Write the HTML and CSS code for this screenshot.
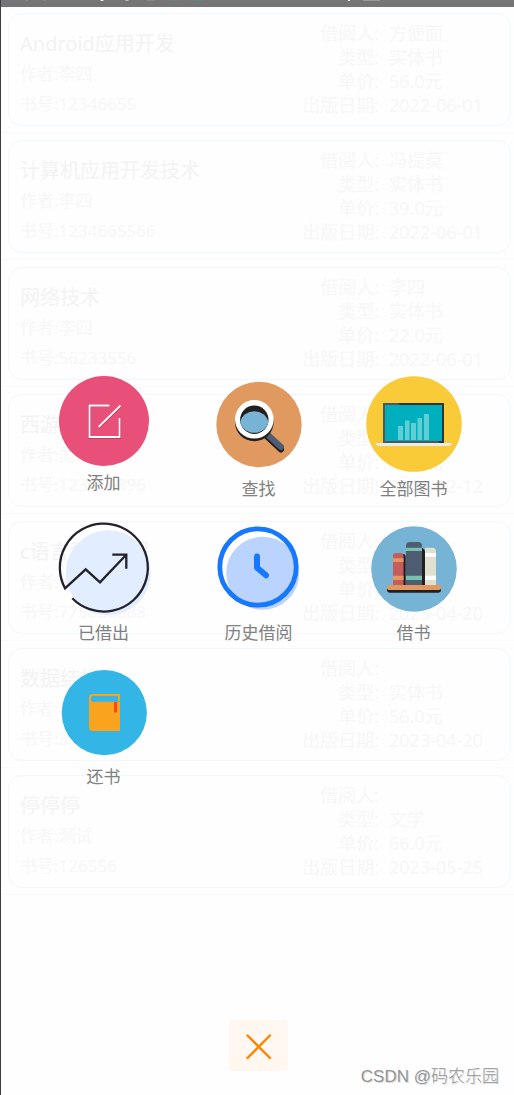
FILE: index.html
```html
<!DOCTYPE html>
<html lang="zh-CN">
<head>
<meta charset="utf-8">
<meta name="viewport" content="width=device-width, initial-scale=1">
<title>图书列表</title>
<link rel="stylesheet" href="styles.css">
</head>
<body>
<div class="screen">
  <header class="status" aria-hidden="true">
    <svg class="status-icons" width="400" height="7" viewBox="0 0 400 7">
      <circle cx="101" cy="-1" r="2" fill="#fff"/>
      <circle cx="126" cy="-1" r="2" fill="#ccc"/>
      <path d="M24 0h3M42 0h3M146 0h8" stroke="#999"/>
      <path d="M169 0h9" stroke="#6c9168"/>
      <path d="M193 0h8" stroke="#4a9d88"/>
      <path d="M348 0v1" stroke="#fff" stroke-width="2"/>
      <path d="M362 0h17" stroke="#bbb"/>
    </svg>
  </header>
  <main>
    <ul class="books">
      <li class="row"><article class="card">
        <div class="info"><h2 class="title">Android应用开发</h2><p>作者:李四</p><p>书号:12346655</p></div>
        <dl class="meta"><dt>借阅人:</dt><dd>方便面</dd><dt>类型:</dt><dd>实体书</dd><dt>单价:</dt><dd>56.0元</dd><dt>出版日期:</dt><dd>2022-06-01</dd></dl>
      </article></li>
      <li class="row"><article class="card">
        <div class="info"><h2 class="title">计算机应用开发技术</h2><p>作者:李四</p><p>书号:1234665566</p></div>
        <dl class="meta"><dt>借阅人:</dt><dd>冯提莫</dd><dt>类型:</dt><dd>实体书</dd><dt>单价:</dt><dd>39.0元</dd><dt>出版日期:</dt><dd>2022-06-01</dd></dl>
      </article></li>
      <li class="row"><article class="card">
        <div class="info"><h2 class="title">网络技术</h2><p>作者:李四</p><p>书号:56233556</p></div>
        <dl class="meta"><dt>借阅人:</dt><dd>李四</dd><dt>类型:</dt><dd>实体书</dd><dt>单价:</dt><dd>22.0元</dd><dt>出版日期:</dt><dd>2022-06-01</dd></dl>
      </article></li>
      <li class="row"><article class="card">
        <div class="info"><h2 class="title">西游记</h2><p>作者:吴承恩</p><p>书号:123456896</p></div>
        <dl class="meta"><dt>借阅人:</dt><dd></dd><dt>类型:</dt><dd>实体书</dd><dt>单价:</dt><dd>56.0元</dd><dt>出版日期:</dt><dd>2021-12-12</dd></dl>
      </article></li>
      <li class="row"><article class="card">
        <div class="info"><h2 class="title">c语言程序教程</h2><p>作者:李四</p><p>书号:775858888</p></div>
        <dl class="meta"><dt>借阅人:</dt><dd></dd><dt>类型:</dt><dd>实体书</dd><dt>单价:</dt><dd>56.0元</dd><dt>出版日期:</dt><dd>2023-04-20</dd></dl>
      </article></li>
      <li class="row"><article class="card">
        <div class="info"><h2 class="title">数据结构</h2><p>作者:李四</p><p>书号:35666</p></div>
        <dl class="meta"><dt>借阅人:</dt><dd></dd><dt>类型:</dt><dd>实体书</dd><dt>单价:</dt><dd>56.0元</dd><dt>出版日期:</dt><dd>2023-04-20</dd></dl>
      </article></li>
      <li class="row"><article class="card">
        <div class="info"><h2 class="title">停停停</h2><p>作者:测试</p><p>书号:126556</p></div>
        <dl class="meta"><dt>借阅人:</dt><dd></dd><dt>类型:</dt><dd>文学</dd><dt>单价:</dt><dd>66.0元</dd><dt>出版日期:</dt><dd>2023-05-25</dd></dl>
      </article></li>
    </ul>
  </main>

  <div class="overlay">
    <nav class="menu">
      <button class="item" type="button">
        <svg width="90" height="90" viewBox="0 0 90 90" aria-hidden="true">
          <circle cx="45" cy="45" r="45" fill="#e8507a"/>
          <g fill="none" stroke="#c23a62" stroke-width="3"><path d="M51 29.5H30.500V61.500H60.500V42M39.500 51.500L61.500 30"/></g>
          <g fill="none" stroke="#fff" stroke-width="1.800"><path d="M50.500 29.500H30.500V61H60.500V42M39.500 51L61.500 29.500"/></g>
        </svg>
        <span>添加</span>
      </button>
      <button class="item" type="button">
        <svg width="96" height="96" viewBox="0 0 96 96" aria-hidden="true">
          <circle cx="48" cy="48.500" r="42.700" fill="#e0995e"/>
          <path d="M56.500 61L70 73.500" stroke="#231f20" stroke-width="6" stroke-linecap="round"/>
          <path d="M56.500 58.500L70 71" stroke="#4f5d73" stroke-width="6" stroke-linecap="round"/>
          <circle cx="43.300" cy="46" r="19.300" fill="#231f20"/>
          <circle cx="43.300" cy="43.300" r="19.300" fill="#fff"/>
          <circle cx="43.300" cy="43.800" r="14.200" fill="#231f20"/>
          <path d="M29.300 46a14.200 13 0 0 1 28 0 14.100 12.300 0 0 1-28 0z" fill="#77b3d4"/>
        </svg>
        <span>查找</span>
      </button>
      <button class="item" type="button">
        <svg width="96" height="96" viewBox="0 0 96 96" aria-hidden="true">
          <circle cx="48" cy="48" r="47.800" fill="#facb39"/>
          <path d="M17 27h61v40H17z" fill="#333"/>
          <path d="M17 27h15l42 40H17z" fill="#555"/>
          <path d="M19 29h57v36H19z" fill="#00afbd"/>
          <path d="M32 50h5v14h-5zM39 44.500h4.500V64H39zM45 47h5v17h-5zM51.500 42H56v22h-4.500zM58 38h5v26h-5z" fill="#5fcfd6"/>
          <path d="M9.700 67h76v1.200l-2.200 1.900H12l-2.300-1.900z" fill="#ebebe6"/>
        </svg>
        <span>全部图书</span>
      </button>
      <button class="item" type="button">
        <svg width="96" height="96" viewBox="0 0 96 96" aria-hidden="true">
          <circle cx="52.300" cy="52.700" r="42.500" fill="#e2eeff"/>
          <path d="M16.300 78.300A44 44 0 1 0 9 68.300L29.700 49.300 44 62.300 70 35M56.300 34.700h14v14" fill="none" stroke="#23222c" stroke-width="2.300"/>
        </svg>
        <span>已借出</span>
      </button>
      <button class="item" type="button">
        <svg width="96" height="96" viewBox="0 0 96 96" aria-hidden="true">
          <circle cx="51.700" cy="53.300" r="36.500" fill="#bad3ff"/>
          <circle cx="47" cy="47" r="38.200" fill="none" stroke="#1677ff" stroke-width="4.800"/>
          <path d="M46 36.500v11.300l9 7.500" fill="none" stroke="#1677ff" stroke-width="6" stroke-linecap="round" stroke-linejoin="round"/>
        </svg>
        <span>历史借阅</span>
      </button>
      <button class="item" type="button">
        <svg width="96" height="96" viewBox="0 0 96 96" aria-hidden="true">
          <circle cx="48" cy="49" r="42.800" fill="#77b3d4"/>
          <path d="M37 34q2.700 0 2.700 3v28H37zM56 28q3 1 3 4v33h-3z" fill="#231f20"/>
          <path d="M27 65V36q0-3 3-3h4.500q3 0 3 3v29z" fill="#c75c5c"/>
          <path d="M27 38.300h10.500V42H27zM27 55.700h10.500V60H27z" fill="#e0995e"/>
          <path d="M40 65V26q0-4 4-4h8q4 0 4 4v39z" fill="#4f5d73"/>
          <path d="M40 27.700h16V31H40zM40 55.700h16V60H40z" fill="#76c2af"/>
          <path d="M59 65V27.700h7.500q3.500 0 3.500 3.500V65z" fill="#e0e0d1"/>
          <path d="M59 33h11v3.700H59zM59 55.700h11V60H59z" fill="#fff"/>
          <path d="M21 68h54v2q0 2.700-3 2.700H24q-3 0-3-2.700z" fill="#231f20"/>
          <path d="M21 67q0-2 2-2h50q2 0 2 2v1q0 2-2 2H23q-2 0-2-2z" fill="#e0995e"/>
        </svg>
        <span>借书</span>
      </button>
      <button class="item" type="button">
        <svg width="96" height="96" viewBox="0 0 96 96" aria-hidden="true">
          <circle cx="48.300" cy="48.700" r="42.600" fill="#33b5e6"/>
          <path d="M33 34q0-4 4-4h27v37H37q-4 0-4-4z" fill="#faa31e"/>
          <path d="M35 34q0-2 2-2h25v5.700H37q-2 0-2-2zM62 36.700h2v1h-2z" fill="#33b5e6"/>
          <path d="M58 38h3v11l-1.500-1.200L58 49z" fill="#ff4713"/>
        </svg>
        <span>还书</span>
      </button>
    </nav>
    <button class="close" type="button" aria-label="关闭">
      <svg width="59" height="51" viewBox="0 0 59 51" aria-hidden="true">
        <path d="M29.500 13v26M16.500 26h26" stroke="#fffdfb" stroke-width="3"/>
        <path d="M18.500 15.500l22.500 22.500M41 15.500L18.500 38" stroke="#ff8400" stroke-width="2.400" stroke-linecap="round"/>
      </svg>
    </button>
  </div>
  <p class="watermark">CSDN @码农乐园</p>
</div>
</body>
</html>
```

FILE: styles.css
```css
* {
  box-sizing: border-box;
}

body {
  margin: 0;
  background: #fefefe;
  font-family: "Noto Sans", "Noto Sans CJK SC", sans-serif;
  font-size: 17px;
  font-weight: 400;
}

h2, p, ul, dl, dd {
  margin: 0;
  padding: 0;
}

.screen {
  position: relative;
  min-height: 100vh;
  border-left: 1px solid #3c3d45;
}

.status {
  height: 7px;
  overflow: hidden;
  background: #757575;
}

.status-icons {
  display: block;
}

.books {
  display: grid;
  gap: 1px;
  list-style: none;
}

.row {
  padding: 6px 3px 6px 7px;
  border-bottom: 1px solid #fbfbfb;
}

.card {
  display: flex;
  justify-content: space-between;
  height: 113px;
  padding: 0 11px;
  border: 1px solid #f0f8ff;
  border-radius: 14px;
  color: #f7f7f7;
}

.info {
  padding-top: 15px;
  line-height: 30px;
}

.title {
  color: #f3f3f3;
  font-size: 20px;
  font-weight: 400;
}

.meta {
  display: grid;
  grid-template-columns: auto 110px;
  grid-auto-rows: 24px;
  column-gap: 10px;
  padding-top: 7px;
  font-size: 18px;
  line-height: 24px;
}

.meta dt {
  text-align: right;
}

.overlay {
  position: absolute;
  inset: 0;
  display: flex;
  flex-direction: column;
  justify-content: flex-end;
  align-items: center;
  gap: 226px;
  padding: 0 23px 24px 25px;
}

.menu {
  display: grid;
  grid-template-columns: repeat(3, 1fr);
  row-gap: 14px;
  width: 100%;
}

.item {
  display: flex;
  flex-direction: column;
  align-items: center;
  justify-content: flex-start;
  padding: 0;
  border: 0;
  background: none;
  color: #808080;
  font: inherit;
  line-height: 34px;
}

.item svg,
.close svg {
  display: block;
}

.close {
  padding: 0;
  border: 0;
  border-radius: 4px;
  background: #fff7f0;
}

.watermark {
  position: absolute;
  right: 15px;
  bottom: 6px;
  color: #949494;
  font-family: "Liberation Sans", "Noto Sans CJK SC", sans-serif;
  font-size: 17px;
  font-weight: 300;
  line-height: 24px;
  text-shadow: 1px 1px 0 #e0e0e0;
}
```
